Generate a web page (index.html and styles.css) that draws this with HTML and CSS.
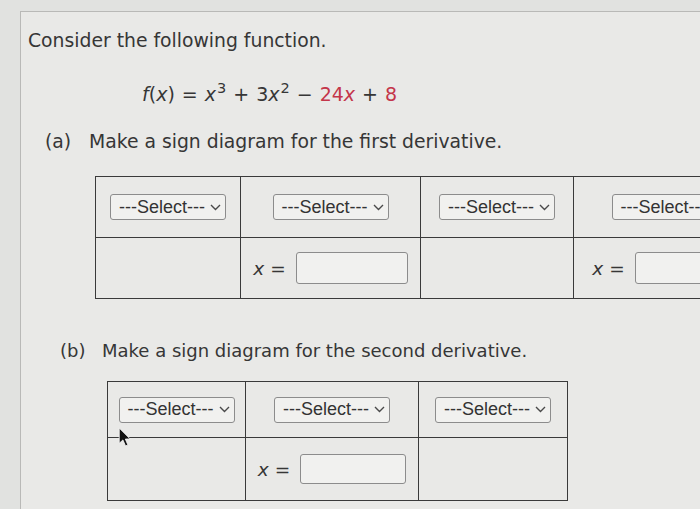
FILE: index.html
```html
<!DOCTYPE html>
<html>
<head>
<meta charset="utf-8">
<link rel="stylesheet" href="styles.css">
</head>
<body>
<div class="page">
  <div class="panel">
    <p class="intro">Consider the following function.</p>
    <p class="formula"><i>f</i>(<i>x</i>)<span class="op">=</span><i>x</i><sup>3</sup><span class="op">+</span>3<i>x</i><sup>2</sup><span class="op">−</span><span class="red">24<i>x</i></span><span class="op">+</span><span class="red">8</span></p>
    <p class="part part-a"><span class="label">(a)</span>Make a sign diagram for the first derivative.</p>
    <table class="sign sign-a">
      <colgroup><col class="c1"><col class="c2"><col class="c3"><col class="c4"></colgroup>
      <tr class="r1">
        <td><span class="select">---Select---<svg class="chev" viewBox="0 0 11 7"><polyline points="1,1 5.5,5.5 10,1"/></svg></span></td>
        <td><span class="select">---Select---<svg class="chev" viewBox="0 0 11 7"><polyline points="1,1 5.5,5.5 10,1"/></svg></span></td>
        <td><span class="select">---Select---<svg class="chev" viewBox="0 0 11 7"><polyline points="1,1 5.5,5.5 10,1"/></svg></span></td>
        <td><span class="select">---Select---<svg class="chev" viewBox="0 0 11 7"><polyline points="1,1 5.5,5.5 10,1"/></svg></span></td>
      </tr>
      <tr class="r2">
        <td></td>
        <td><span class="eq"><i>x</i> =</span><span class="input"></span></td>
        <td></td>
        <td><span class="eq"><i>x</i> =</span><span class="input"></span></td>
      </tr>
    </table>
    <p class="part part-b"><span class="label">(b)</span>Make a sign diagram for the second derivative.</p>
    <table class="sign sign-b">
      <colgroup><col class="d1"><col class="d2"><col class="d3"></colgroup>
      <tr class="s1">
        <td><span class="select">---Select---<svg class="chev" viewBox="0 0 11 7"><polyline points="1,1 5.5,5.5 10,1"/></svg></span></td>
        <td><span class="select">---Select---<svg class="chev" viewBox="0 0 11 7"><polyline points="1,1 5.5,5.5 10,1"/></svg></span></td>
        <td><span class="select">---Select---<svg class="chev" viewBox="0 0 11 7"><polyline points="1,1 5.5,5.5 10,1"/></svg></span></td>
      </tr>
      <tr class="s2">
        <td></td>
        <td><span class="eq"><i>x</i> =</span><span class="input"></span></td>
        <td></td>
      </tr>
    </table>
  </div>
  <svg class="cursor" viewBox="0 0 12 19"><path d="M1 1 L1 15.5 L4.5 12.3 L7 18 L9.2 17 L6.8 11.5 L11.3 11.3 Z"/></svg>
</div>
</body>
</html>
```
FILE: styles.css
```css
html, body {
  margin: 0;
  padding: 0;
}
body {
  width: 700px;
  height: 509px;
  overflow: hidden;
  background: #e1e2e0;
  font-family: "DejaVu Sans", Verdana, sans-serif;
  color: #363636;
}
.page {
  position: relative;
  width: 700px;
  height: 509px;
  overflow: hidden;
}
.panel {
  margin: 11px 0 0 20px;
  height: 520px;
  border-top: 1px solid #b9b9b7;
  border-left: 1px solid #b9b9b7;
  background: #e9e9e7;
}
.panel p {
  margin: 0;
  font-size: 18.8px;
  line-height: 24px;
  white-space: nowrap;
}
.panel .intro {
  padding: 17px 0 0 7px;
}
.panel .formula {
  margin: 29px 0 0 121px;
  font-size: 19px;
}
.formula .op {
  margin: 0 7px;
}
.formula sup {
  font-size: 14.5px;
  line-height: 0;
  vertical-align: 8px;
  margin-left: 1px;
}
.red {
  color: #c4354a;
}
.panel .part-a {
  margin: 24px 0 0 24px;
}
.panel .part-b {
  margin: 40px 0 0 39px;
  font-size: 18px;
}
.label {
  display: inline-block;
  width: 44px;
}
.part-b .label {
  width: 42px;
}
.sign {
  border-collapse: collapse;
  table-layout: fixed;
}
.sign td {
  border: 1.5px solid #3a3a3a;
  padding: 0;
  text-align: center;
  vertical-align: middle;
  white-space: nowrap;
}
.sign-a {
  margin: 22px 0 0 74px;
  width: 670px;
}
.c1 { width: 145px; }
.c2 { width: 180px; }
.c3 { width: 153px; }
.c4 { width: 192px; }
.r1 td { height: 60px; }
.r2 td { height: 60px; }
.sign-b {
  margin: 18px 0 0 86px;
  width: 460px;
}
.d1 { width: 138px; }
.d2 { width: 173px; }
.d3 { width: 149px; }
.s1 td { height: 55px; }
.s2 td { height: 62px; }
.select {
  display: inline-flex;
  align-items: center;
  gap: 5px;
  height: 24px;
  padding: 0 4px 0 8px;
  border: 1px solid #8c8c8c;
  border-radius: 3px;
  background: #f1f1ef;
  font-family: "Liberation Sans", Arial, sans-serif;
  font-size: 18px;
  color: #333;
  vertical-align: middle;
}
.chev {
  width: 11px;
  height: 7px;
  fill: none;
  stroke: #4a4a4a;
  stroke-width: 1.4;
}
.eq {
  font-size: 18.5px;
  margin-right: 10px;
  vertical-align: middle;
}
.input {
  display: inline-block;
  width: 110px;
  height: 30px;
  border: 1px solid #8c8c8c;
  border-radius: 3px;
  background: #f1f1ef;
  vertical-align: middle;
}
.sign-b .input {
  width: 104px;
  height: 28px;
}
.cursor {
  position: absolute;
  left: 118px;
  top: 427px;
  width: 13px;
  height: 20px;
  fill: #111;
  stroke: #f4f4f4;
  stroke-width: 0.8;
}
```
